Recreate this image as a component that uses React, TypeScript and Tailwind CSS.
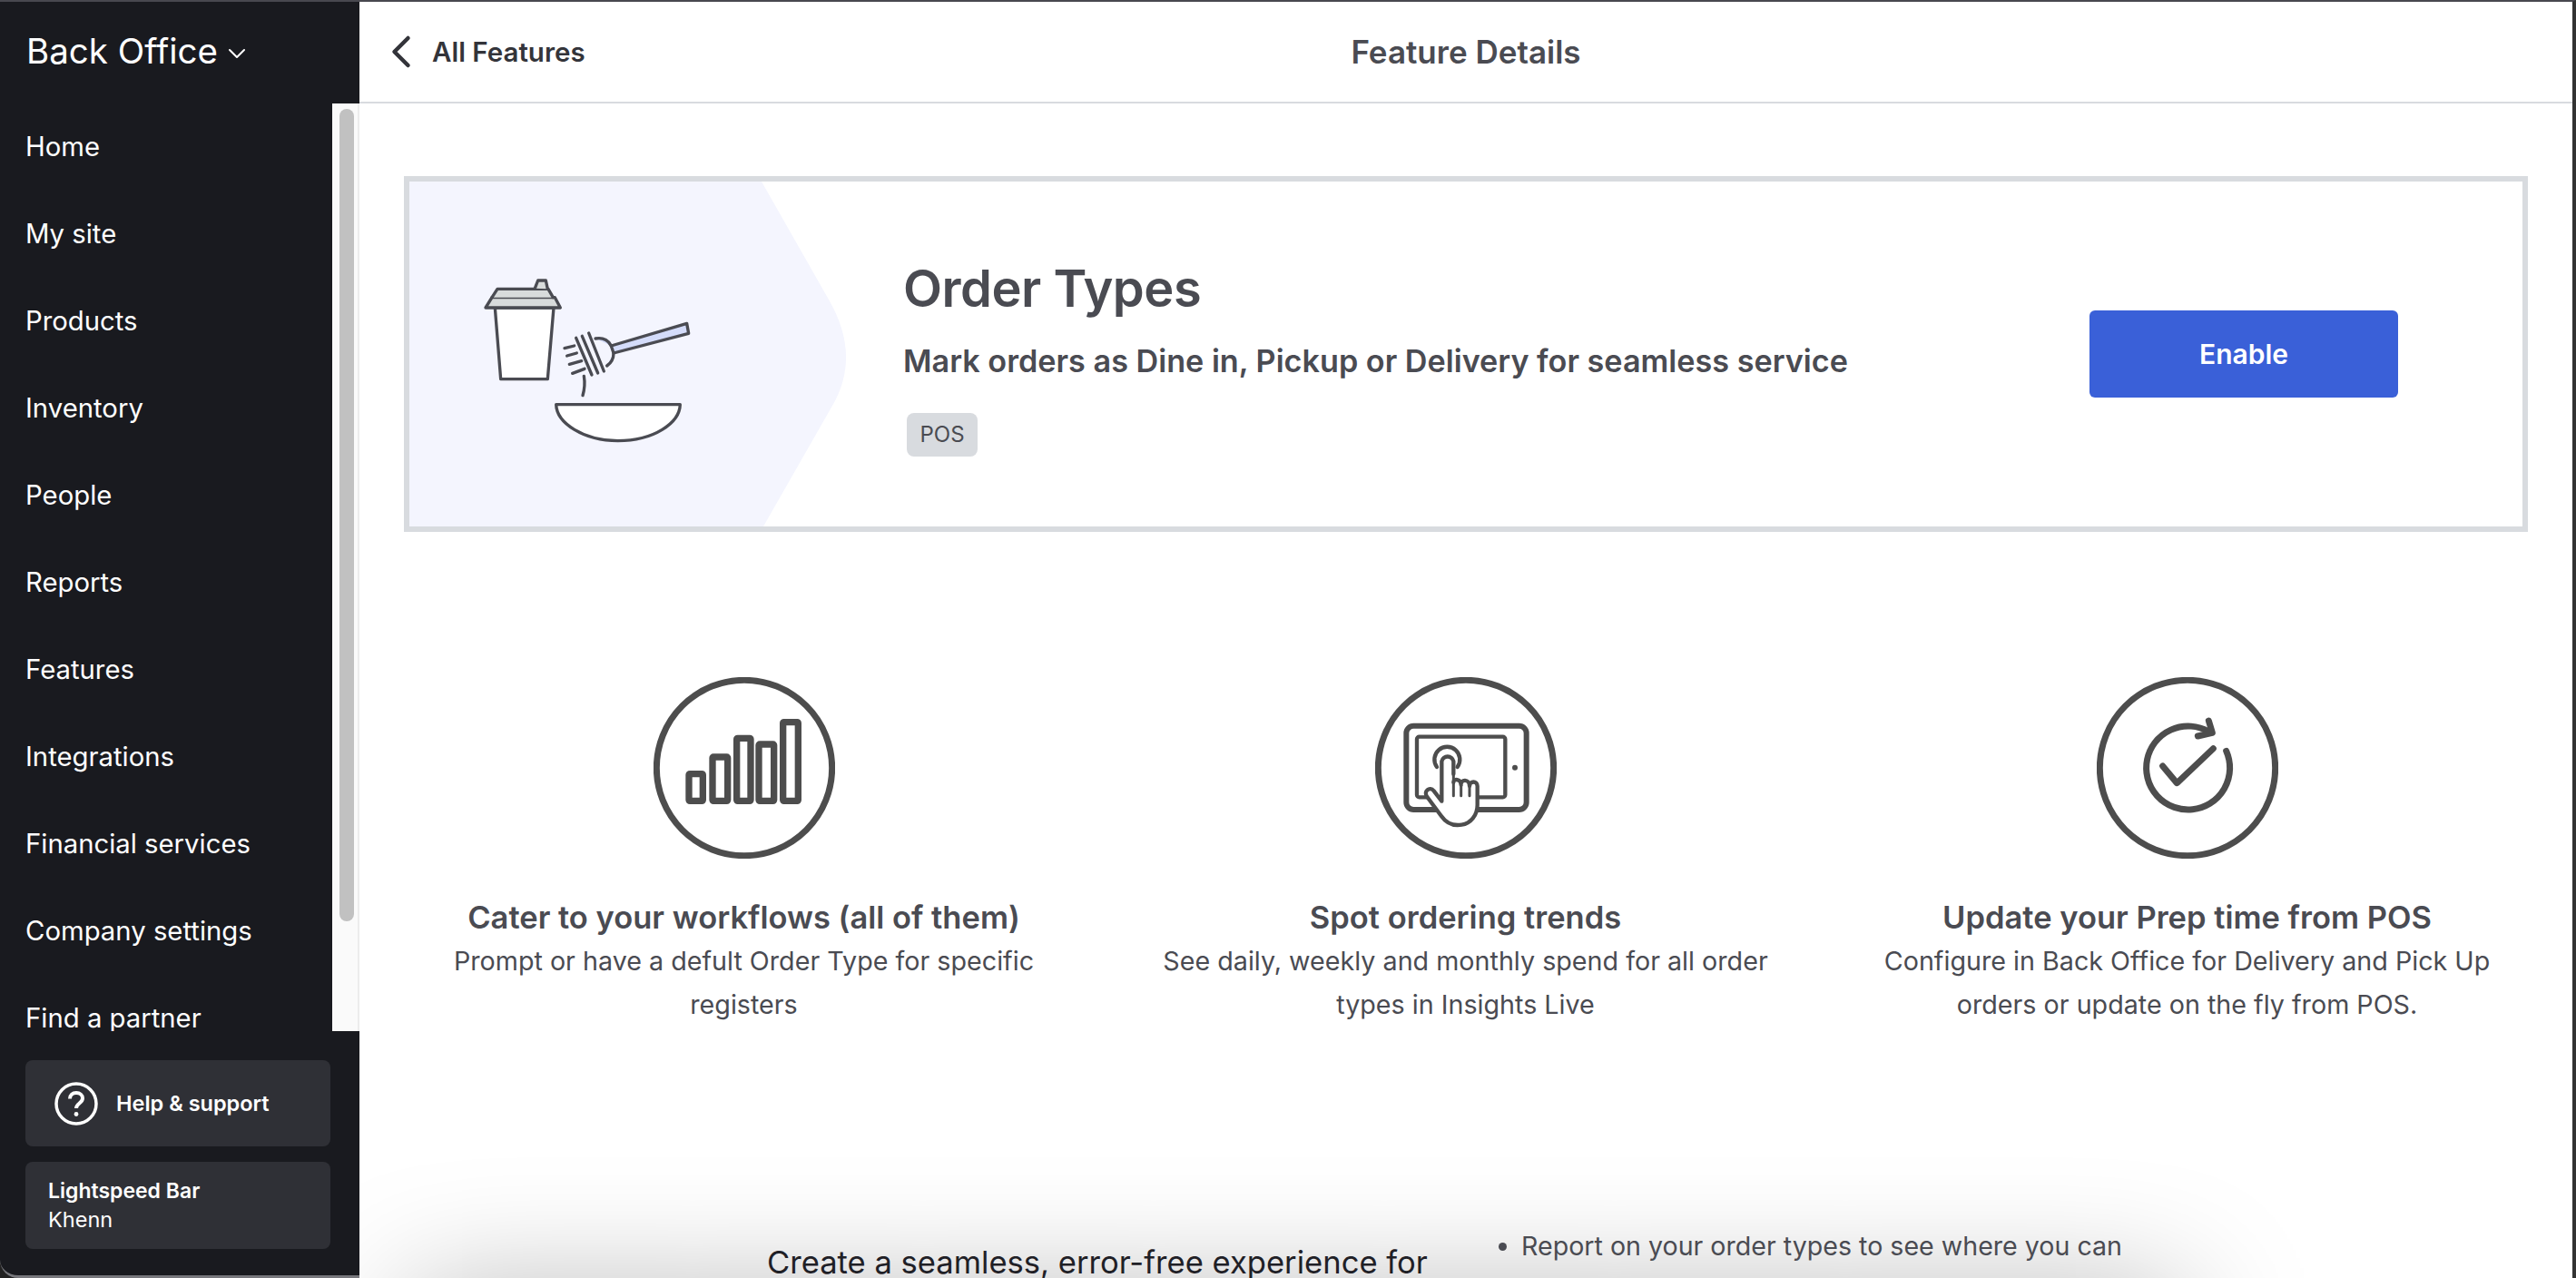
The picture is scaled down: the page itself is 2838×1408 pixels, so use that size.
/**
 * Back Office: feature details page for Order Types.
 */
import { ChevronDown, ChevronLeft } from 'lucide-react';

const NAV = [
  'Home',
  'My site',
  'Products',
  'Inventory',
  'People',
  'Reports',
  'Features',
  'Integrations',
  'Financial services',
  'Company settings',
  'Find a partner',
];

function OrderIllustration() {
  return (
    <svg width="240" height="190" viewBox="270 370 720 570" className="shrink-0">
      <g stroke="#4a4b52" strokeWidth="10" strokeLinejoin="round" strokeLinecap="round">
        <path d="M316 478 335 714H490L510 478Z" fill="#fff" />
        <path d="M285 478 306 444H514L532 478Z" fill="#d8dbdb" />
        <path d="M306 444 324 416H492L508 444" fill="#d8dbdb" />
        <path d="M448 414 458 388H484L490 416" fill="#d8dbdb" />
        <path d="M518 798H928C926 860 840 918 722 918 610 918 520 860 518 798Z" fill="#fff" />
        <path d="M700 604 950 530 956 563 708 628Z" fill="#d4dcfa" />
        <path d="M648 580C676 574 694 590 700 604M708 628C708 646 698 662 686 670" fill="#d4dcfa" />
        <path d="M584 578 636 700M604 572 656 694M626 562 676 688" fill="none" />
        <path d="M546 612 578 604M554 637 586 628M562 665 602 654M572 695 612 680" fill="none" />
        <path d="M610 704C614 728 612 748 606 768" fill="none" />
      </g>
    </svg>
  );
}

function BarsIcon() {
  return (
    <svg width="200" height="200" viewBox="60 48 600 600" fill="none" stroke="#4d4d4d" strokeWidth="21" strokeLinejoin="round">
      <circle cx="360" cy="348" r="290" />
      <g strokeWidth="22">
        <rect x="177" y="368" width="46" height="89" rx="3" />
        <rect x="255" y="312" width="50" height="145" rx="3" />
        <rect x="335" y="250" width="46" height="207" rx="3" />
        <rect x="408" y="270" width="50" height="187" rx="3" />
        <rect x="488" y="197" width="50" height="260" rx="3" />
      </g>
    </svg>
  );
}

function TabletIcon() {
  return (
    <svg width="200" height="200" viewBox="46 48 600 600" fill="none" stroke="#4d4d4d" strokeWidth="21" strokeLinecap="round" strokeLinejoin="round">
      <circle cx="346" cy="348" r="290" />
      <rect x="149" y="209" width="397" height="277" rx="24" strokeWidth="18" />
      <rect x="184" y="245" width="292" height="200" rx="8" strokeWidth="13" />
      <circle cx="508" cy="347" r="9" fill="#4d4d4d" stroke="none" />
      <path d="M250 345A42 42 0 1 1 318 345" strokeWidth="13" />
      <path
        d="M305 368V326A20 20 0 0 0 266 326V458L240 424C226 408 204 426 218 444L264 506C282 532 308 540 332 536 362 532 384 504 384 470V408C384 390 358 390 358 408 358 384 328 384 330 404 330 384 305 382 305 396"
        fill="#fff"
        strokeWidth="13"
      />
      <path d="M305 368V440M330 404V440M358 408V440" strokeWidth="9" />
    </svg>
  );
}

function CheckCycleIcon() {
  return (
    <svg width="200" height="200" viewBox="30 48 600 600" fill="none" stroke="#4d4d4d" strokeWidth="21" strokeLinecap="round" strokeLinejoin="round">
      <circle cx="330" cy="348" r="290" />
      <path d="M458 292A138 138 0 1 1 400 228" />
      <path d="M400 192 412 232 364 243" />
      <path d="M248 342 295 398 415 284" />
    </svg>
  );
}

function HelpIcon() {
  return (
    <svg width="48" height="48" viewBox="0 0 48 48" fill="none" stroke="#fff">
      <circle cx="24" cy="24" r="22" strokeWidth="3.5" />
      <path d="M17 18.5c0-4 3-6.5 7-6.5s7 2.6 7 6c0 5.5-7 5.5-7 11" strokeWidth="4" />
      <circle cx="24" cy="35.5" r="2.4" fill="#fff" stroke="none" />
    </svg>
  );
}

const FEATURES = [
  {
    icon: <BarsIcon />,
    title: 'Cater to your workflows (all of them)',
    text: 'Prompt or have a defult Order Type for specific registers',
  },
  {
    icon: <TabletIcon />,
    title: 'Spot ordering trends',
    text: 'See daily, weekly and monthly spend for all order types in Insights Live',
  },
  {
    icon: <CheckCycleIcon />,
    title: 'Update your Prep time from POS',
    text: 'Configure in Back Office for Delivery and Pick Up orders or update on the fly from POS.',
  },
];

function Sidebar() {
  return (
    <aside className="flex w-[396px] shrink-0 flex-col rounded-bl-[20px] border-b-[3px] border-[#77777c] bg-[#191a1f] text-white">
      <div className="flex h-[112px] shrink-0 items-center gap-[5px] pb-[4px] pl-[29px] text-[38.5px] leading-none">
        Back Office
        <ChevronDown size={32} strokeWidth={1.5} className="mt-[6px]" />
      </div>

      <div className="flex h-[1022px] shrink-0">
        <nav className="flex h-full w-[366px] flex-col gap-[48px] overflow-hidden pt-[27px]">
          {NAV.map((item) => (
            <a key={item} className="h-[48px] shrink-0 pl-[28px] text-[29.3px] leading-[42px]">
              {item}
            </a>
          ))}
        </nav>
        <div className="w-[30px] border-r-2 border-[#ececec] bg-[#fafafa] pt-[6px] pl-[8px]">
          <div className="h-[895px] w-[16px] rounded-full bg-[#c1c1c1]" />
        </div>
      </div>

      <div className="flex flex-col gap-[17px] pt-[32px] pl-[28px]">
        <div className="flex h-[95px] w-[336px] items-center gap-[20px] rounded-[8px] bg-[#2f3036] pl-[32px] text-[23.5px] font-semibold">
          <HelpIcon />
          Help &amp; support
        </div>
        <div className="flex h-[96px] w-[336px] flex-col justify-center rounded-[8px] bg-[#2f3036] pl-[25px] text-[23px] leading-[31px]">
          <span className="font-semibold">Lightspeed Bar</span>
          <span className="text-[23.5px]">Khenn</span>
        </div>
      </div>
    </aside>
  );
}

export default function App() {
  return (
    <div className="flex h-[1408px] w-[2838px] overflow-hidden border-t-2 border-r-4 border-t-[#48484f] border-r-[#333] bg-[#222] font-['Inter',sans-serif] text-[#4a4b52]">
      <Sidebar />

      <main className="relative flex min-w-0 flex-1 flex-col overflow-hidden bg-white">
        <header className="relative flex h-[112px] shrink-0 items-center justify-center border-b-2 border-[#d8dbdf]">
          <div className="absolute top-0 left-[16px] flex h-full items-center gap-[4px] text-[29.5px] font-semibold text-[#33343a]">
            <ChevronLeft size={60} strokeWidth={1.8} />
            All Features
          </div>
          <h1 className="text-[35px] font-semibold">Feature Details</h1>
        </header>

        <section className="mt-[80px] ml-[49px] flex h-[392px] w-[2340px] shrink-0 items-center border-[6px] border-[#d8dbdf] bg-white">
          <div className="relative flex h-full w-[480px] shrink-0 items-center">
            <svg width="484" height="380" viewBox="0 0 484 380" className="absolute inset-0">
              <path d="M0 0H388L462 130Q498 192 466 247L390 380H0Z" fill="#f4f5fe" />
            </svg>
            <div className="relative mt-[16px] ml-[79px]">
              <OrderIllustration />
            </div>
          </div>
          <div className="mt-[6px] ml-[64px] flex-1">
            <h2 className="text-[56px] leading-[70px] font-semibold tracking-[-0.5px]">Order Types</h2>
            <p className="mt-[24px] text-[34.2px] leading-[42px] font-semibold">
              Mark orders as Dine in, Pickup or Delivery for seamless service
            </p>
            <span className="mt-[36px] ml-[4px] flex h-[48px] w-[78px] items-center justify-center rounded-[8px] bg-[#d8dbdf] text-[24px]">
              POS
            </span>
          </div>
          <button className="mr-[137px] h-[96px] w-[340px] rounded-[6px] bg-[#3a60d8] text-[30px] font-semibold text-white">
            Enable
          </button>
        </section>

        <section className="mt-[160px] ml-[26px] grid w-[2385px] shrink-0 grid-cols-3">
          {FEATURES.map((f) => (
            <div key={f.title} className="flex flex-col items-center px-[56px] text-center">
              {f.icon}
              <h3 className="mt-[41px] text-[34.5px] leading-[48px] font-semibold">{f.title}</h3>
              <p className="text-[28.7px] leading-[48px]">{f.text}</p>
            </div>
          ))}
        </section>

        {/* next block, cut off by the window, with its shadow bleeding up */}
        <div className="absolute top-[1428px] left-[56px] h-[100px] w-[1950px] shadow-[0_0_140px_0_rgba(0,0,0,0.34)]" />
        <section className="relative mt-[235px] ml-[449px] flex shrink-0 items-start">
          <p className="w-[780px] shrink-0 text-[34.6px] leading-[48px] whitespace-nowrap text-[#1f2026]">
            Create a seamless, error-free experience for
          </p>
          <ul className="-mt-[17px] text-[28.6px] leading-[48px] whitespace-nowrap">
            <li className="ml-[26px] flex items-center gap-[16px]">
              <span className="size-[9px] rounded-full bg-[#4a4b52]" />
              Report on your order types to see where you can
            </li>
          </ul>
        </section>
      </main>
    </div>
  );
}
